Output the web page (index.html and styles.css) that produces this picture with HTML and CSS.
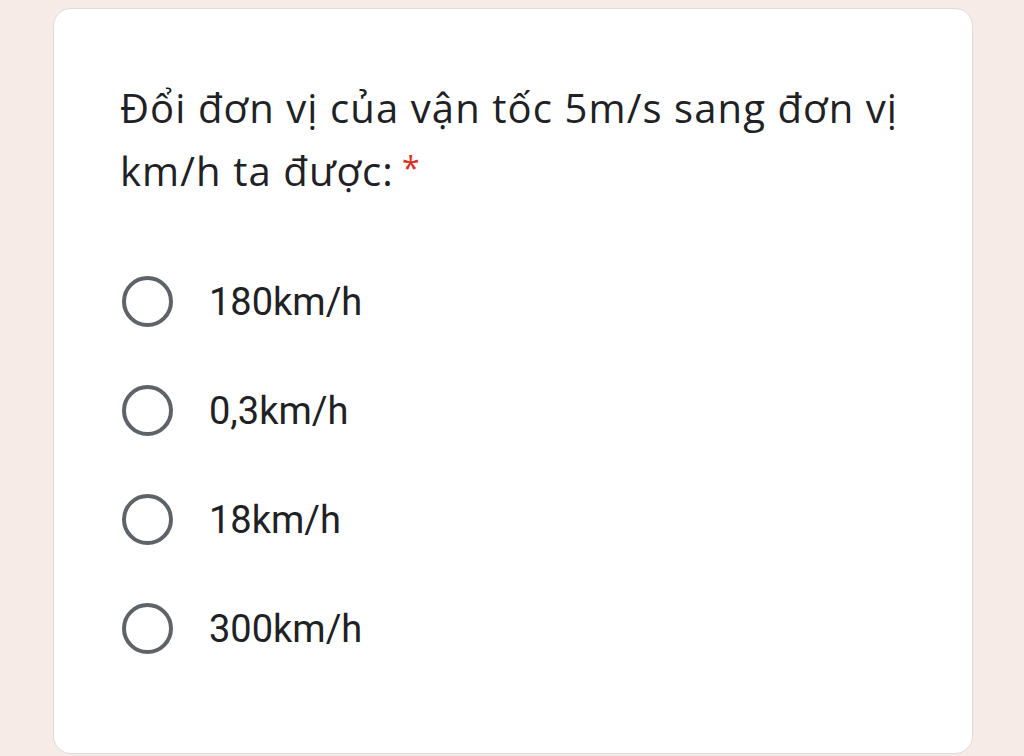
FILE: index.html
```html
<!DOCTYPE html>
<html lang="vi">
<head>
<meta charset="utf-8">
<link rel="stylesheet" href="styles.css">
</head>
<body>
<div class="card">
  <div class="question">Đổi đơn vị của vận tốc 5m/s sang đơn vị km/h ta được:<span class="req">*</span></div>
  <div class="options">
    <div class="option"><span class="radio"></span><span class="label">180km/h</span></div>
    <div class="option"><span class="radio"></span><span class="label">0,3km/h</span></div>
    <div class="option"><span class="radio"></span><span class="label">18km/h</span></div>
    <div class="option"><span class="radio"></span><span class="label">300km/h</span></div>
  </div>
</div>
</body>
</html>
```
FILE: styles.css
```css
html, body {
  margin: 0;
  padding: 0;
  background: #f6ebe6;
  height: 756px;
  overflow: hidden;
}
.card {
  box-sizing: border-box;
  margin: 8px 0 0 53px;
  width: 920px;
  height: 746px;
  background: #ffffff;
  border: 1.5px solid #dcdadf;
  border-radius: 18px;
  padding: 67px 40px 0 66px;
}
.question {
  font-family: "Open Sans", sans-serif;
  font-size: 40px;
  line-height: 63px;
  letter-spacing: 1.1px;
  color: #202124;
  width: 810px;
}
.req {
  display: inline-block;
  margin-left: 8px;
  color: #d93025;
  font-size: 32px;
  line-height: 32px;
  vertical-align: 6px;
}
.options {
  margin-top: 45px;
  display: flex;
  flex-direction: column;
}
.option {
  height: 109px;
  display: flex;
  align-items: center;
}
.radio {
  box-sizing: border-box;
  width: 51px;
  height: 51px;
  border: 4.5px solid #5f6368;
  border-radius: 50%;
  margin-left: 2px;
  flex: none;
}
.label {
  margin-left: 36px;
  font-family: Roboto, sans-serif;
  font-size: 38px;
  color: #202124;
}
```
